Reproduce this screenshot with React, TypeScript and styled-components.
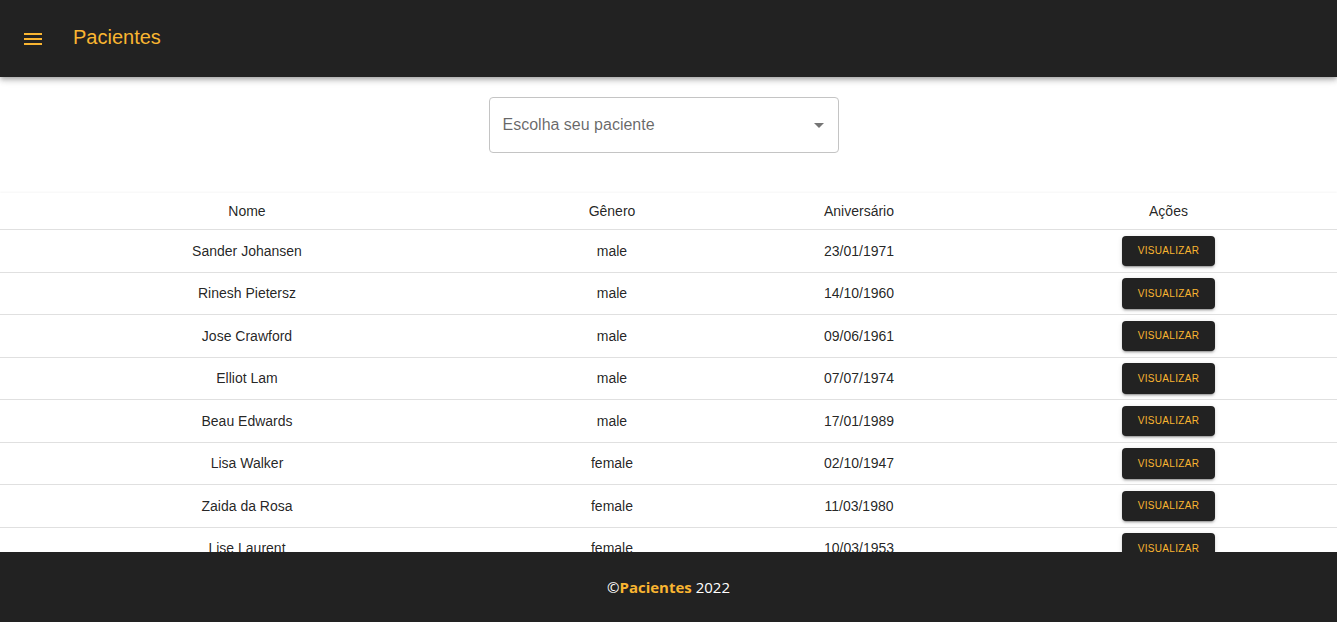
import styled, { createGlobalStyle } from "styled-components"

const GlobalStyle = createGlobalStyle`
  html, body {
    margin: 0;
    padding: 0;
    background: #fff;
    font-family: "Liberation Sans", Arial, sans-serif;
  }
`

const YELLOW = "#f9b531"
const DARK = "#222222"

const TopBar = styled.header`
  position: sticky;
  top: 0;
  z-index: 2;
  height: 77px;
  display: flex;
  align-items: center;
  gap: 28px;
  padding-left: 21px;
  background: ${DARK};
  box-shadow: 0 2px 4px -1px rgba(0,0,0,0.2), 0 4px 5px 0 rgba(0,0,0,0.14), 0 1px 10px 0 rgba(0,0,0,0.12);
`

const MenuButton = styled.button`
  display: flex;
  padding: 0;
  border: 0;
  background: none;
  color: ${YELLOW};
  cursor: pointer;
`

const Title = styled.h1`
  margin: 0 0 2px;
  font-size: 20px;
  font-weight: 400;
  color: ${YELLOW};
`

const Main = styled.main`
  padding: 20px 0 70px;
  display: flex;
  flex-direction: column;
  align-items: center;
  gap: 40px;
`

const SelectBox = styled.div`
  box-sizing: border-box;
  width: 350px;
  height: 56px;
  margin-right: 10px;
  display: flex;
  align-items: center;
  justify-content: space-between;
  padding: 0 7px 0 13px;
  border: 1px solid #c4c4c4;
  border-radius: 4px;
  font-size: 16px;
  color: rgba(0,0,0,0.6);
`

const TablePaper = styled.div`
  width: 100%;
  box-shadow: 0 -1px 2px rgba(0,0,0,0.04);
`

const Table = styled.table`
  width: 100%;
  border-collapse: collapse;
  table-layout: fixed;
  font-size: 14px;
  color: rgba(0,0,0,0.87);
`

const HeadCell = styled.th`
  height: 36px;
  padding: 0 16px;
  font-weight: 400;
  text-align: center;
  border-bottom: 1px solid #e0e0e0;
`

const Cell = styled.td`
  height: 41.5px;
  padding: 0 16px;
  text-align: center;
  border-bottom: 1px solid #e0e0e0;
`

const ActionCell = styled(Cell)`
  padding-left: 28px;
  padding-right: 16px;
`

const ViewButton = styled.button`
  width: 93px;
  height: 30.5px;
  border: 0;
  border-radius: 4px;
  background: ${DARK};
  color: ${YELLOW};
  font-family: "Liberation Sans", Arial, sans-serif;
  font-size: 10px;
  letter-spacing: 0.3px;
  text-transform: uppercase;
  box-shadow: 0 3px 1px -2px rgba(0,0,0,0.2), 0 2px 2px 0 rgba(0,0,0,0.14), 0 1px 5px 0 rgba(0,0,0,0.12);
  cursor: pointer;
`

const Footer = styled.footer`
  position: fixed;
  left: 0;
  right: 0;
  bottom: 0;
  height: 70px;
  display: flex;
  align-items: center;
  justify-content: center;
  background: ${DARK};
  color: #fff;
  font-family: "Open Sans", sans-serif;
  font-size: 15px;
`

const Brand = styled.strong`
  color: ${YELLOW};
  font-weight: 700;
`

const patients = [
  { name: "Sander Johansen", gender: "male", birthday: "23/01/1971" },
  { name: "Rinesh Pietersz", gender: "male", birthday: "14/10/1960" },
  { name: "Jose Crawford", gender: "male", birthday: "09/06/1961" },
  { name: "Elliot Lam", gender: "male", birthday: "07/07/1974" },
  { name: "Beau Edwards", gender: "male", birthday: "17/01/1989" },
  { name: "Lisa Walker", gender: "female", birthday: "02/10/1947" },
  { name: "Zaida da Rosa", gender: "female", birthday: "11/03/1980" },
  { name: "Lise Laurent", gender: "female", birthday: "10/03/1953" },
]

export default function App() {
  return (
    <>
      <GlobalStyle />
      <TopBar>
        <MenuButton aria-label="menu">
          <svg width="24" height="24" viewBox="0 0 24 24" fill="currentColor">
            <path d="M3 18h18v-2H3v2zm0-5h18v-2H3v2zm0-7v2h18V6H3z" />
          </svg>
        </MenuButton>
        <Title>Pacientes</Title>
      </TopBar>
      <Main>
        <SelectBox>
          <span>Escolha seu paciente</span>
          <svg width="24" height="24" viewBox="0 0 24 24" fill="rgba(0,0,0,0.54)">
            <path d="M7 10l5 5 5-5z" />
          </svg>
        </SelectBox>
        <TablePaper>
          <Table>
            <colgroup>
              <col style={{ width: "494px" }} />
              <col style={{ width: "236px" }} />
              <col style={{ width: "258px" }} />
              <col />
            </colgroup>
            <thead>
              <tr>
                <HeadCell>Nome</HeadCell>
                <HeadCell>Gênero</HeadCell>
                <HeadCell>Aniversário</HeadCell>
                <HeadCell style={{ paddingLeft: 28 }}>Ações</HeadCell>
              </tr>
            </thead>
            <tbody>
              {patients.map(p => (
                <tr key={p.name}>
                  <Cell>{p.name}</Cell>
                  <Cell>{p.gender}</Cell>
                  <Cell>{p.birthday}</Cell>
                  <ActionCell>
                    <ViewButton>Visualizar</ViewButton>
                  </ActionCell>
                </tr>
              ))}
            </tbody>
          </Table>
        </TablePaper>
      </Main>
      <Footer>
        <span>©<Brand>Pacientes</Brand> 2022</span>
      </Footer>
    </>
  )
}
